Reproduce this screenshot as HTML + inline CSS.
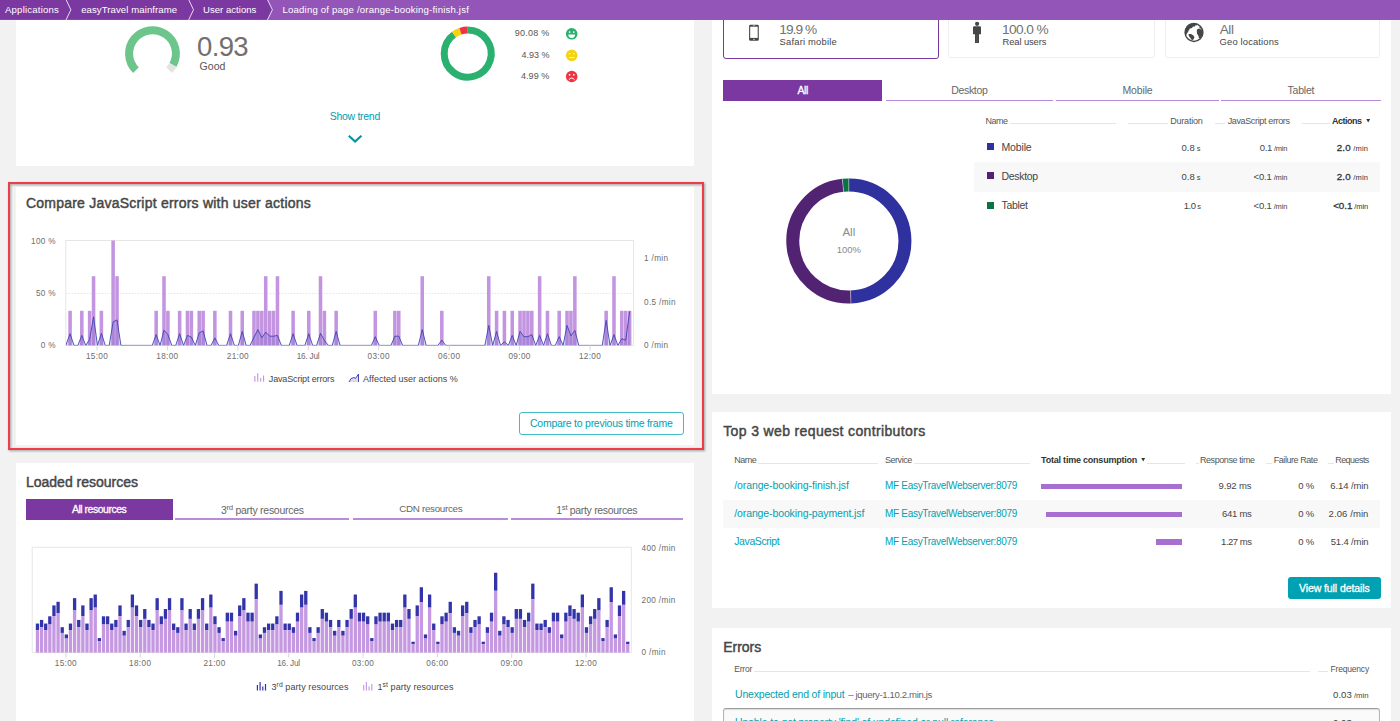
<!DOCTYPE html>
<html><head><meta charset="utf-8">
<style>
*{box-sizing:border-box;margin:0;padding:0}
html,body{width:1400px;height:721px;overflow:hidden;background:#f2f2f2;font-family:"Liberation Sans",sans-serif;color:#454646}
.abs{position:absolute}
.card{position:absolute;background:#fff}
#hdr{position:absolute;left:0;top:0;width:1400px;height:19.5px;background:#9355b7;z-index:10}
#hdr svg{position:absolute;left:0;top:0}
.t{position:absolute;white-space:nowrap}
.ax{font-family:"Liberation Sans",sans-serif;font-size:8.2px;fill:#6d6d6d;letter-spacing:0.35px}
.ul{position:absolute;height:1px;background:#e6e6e6}
</style></head><body>
<div id="hdr">
<svg width="1400" height="20" viewBox="0 0 1400 20">
<path d="M0,0 H267.4 L272.4,9.75 L267.4,19.5 H0 Z" fill="#7c38a1"/>
<path d="M66,-0.5 L70.9,9.75 L66,20" fill="none" stroke="#e9d9f3" stroke-width="1"/>
<path d="M188.6,-0.5 L193.5,9.75 L188.6,20" fill="none" stroke="#e9d9f3" stroke-width="1"/>
<path d="M267.4,-0.5 L272.4,9.75 L267.4,20" fill="none" stroke="#e9d9f3" stroke-width="1"/>
</svg>
<div class="t" style="letter-spacing:0.189px;top:3.00px;font-size:9.6px;line-height:13px;color:#fff;left:5px;"><span>Applications</span></div>
<div class="t" style="letter-spacing:0.073px;top:3.00px;font-size:9.6px;line-height:13px;color:#fff;left:81.2px;"><span>easyTravel mainframe</span></div>
<div class="t" style="letter-spacing:0.006px;top:3.00px;font-size:9.6px;line-height:13px;color:#fff;left:203px;"><span>User actions</span></div>
<div class="t" style="letter-spacing:0.186px;top:3.00px;font-size:9.6px;line-height:13px;color:#fff;left:282.5px;"><span>Loading of page /orange-booking-finish.jsf</span></div>
</div>
<div class="card" style="left:16px;top:20px;width:678px;height:145.7px"></div>
<svg class="abs" style="left:0;top:0" width="700" height="170" viewBox="0 0 700 170">
<path d="M135.95,70.15 A23.4,23.4 0 1 1 172.97,64.94" fill="none" stroke="#6cc58b" stroke-width="8"/>
<path d="M172.97,64.94 A23.4,23.4 0 0 1 169.05,70.15" fill="none" stroke="#e3e3e3" stroke-width="8"/>
<path d="M467.70,30.10 A23.5,23.5 0 1 1 453.99,34.52" fill="none" stroke="#2ab06f" stroke-width="7"/>
<path d="M453.99,34.52 A23.5,23.5 0 0 1 460.44,31.25" fill="none" stroke="#f5d30f" stroke-width="7"/>
<path d="M460.44,31.25 A23.5,23.5 0 0 1 467.70,30.10" fill="none" stroke="#ef3340" stroke-width="7"/>
<g transform="translate(0,0.8)"><circle cx="571.7" cy="33" r="5.8" fill="#2ab06f"/>
<circle cx="569.6" cy="31.3" r="0.9" fill="#fff"/><circle cx="573.8" cy="31.3" r="0.9" fill="#fff"/>
<path d="M568.3,33.8 H575.1 A3.4,3.4 0 0 1 568.3,33.8 Z" fill="#fff"/>
<circle cx="571.7" cy="54.5" r="5.8" fill="#f5d30f"/>
<circle cx="569.6" cy="53" r="0.8" fill="#fff" fill-opacity=".8"/><circle cx="573.8" cy="53" r="0.8" fill="#fff" fill-opacity=".8"/>
<rect x="569" y="56.3" width="5.4" height="1" fill="#fff" fill-opacity=".8"/>
<circle cx="571.7" cy="75.7" r="5.8" fill="#ef3340"/>
<circle cx="569.6" cy="74" r="0.9" fill="#fff"/><circle cx="573.8" cy="74" r="0.9" fill="#fff"/>
<path d="M568.8,79 Q571.7,75.5 574.6,79" fill="none" stroke="#fff" stroke-width="1"/>
</g>
<path d="M348.8,135.8 L355.1,141.6 L361.4,135.8" fill="none" stroke="#0097a7" stroke-width="2.2"/>
</svg>
<div class="t" style="letter-spacing:-0.633px;top:30.00px;font-size:27.5px;line-height:33px;color:#707070;left:197px;"><span>0.93</span></div>
<div class="t" style="letter-spacing:0.078px;top:59.00px;font-size:10.5px;line-height:14px;color:#555;left:199.5px;"><span>Good</span></div>
<div class="t" style="letter-spacing:0.238px;top:27.00px;font-size:9px;line-height:12px;color:#555;right:850.60px;"><span>90.08 %</span></div>
<div class="t" style="letter-spacing:-0.005px;top:49.00px;font-size:9px;line-height:12px;color:#555;right:850.60px;"><span>4.93 %</span></div>
<div class="t" style="letter-spacing:0.078px;top:70.00px;font-size:9px;line-height:12px;color:#555;right:850.60px;"><span>4.99 %</span></div>
<div class="t" style="letter-spacing:-0.283px;top:109.00px;font-size:10.5px;line-height:14px;color:#00a1b2;left:329.7px;"><span>Show trend</span></div>
<div class="abs" style="left:8px;top:182px;width:695.5px;height:268px;border:2px solid #ee3d48;filter:drop-shadow(1px 1.5px 1.2px rgba(0,0,0,.36))"></div>
<div class="card" style="left:16px;top:187px;width:678px;height:257.7px"></div>
<div class="t" style="letter-spacing:0.222px;top:194.00px;font-size:14px;line-height:18px;color:#454646;-webkit-text-stroke:0.45px #454646;left:26px;"><span>Compare JavaScript errors with user actions</span></div>
<svg class="abs" style="left:0;top:0" width="700" height="460" viewBox="0 0 700 460">
<rect x="65.8" y="240.5" width="567.7" height="104.89999999999998" fill="#fff" stroke="#e6e6e6" stroke-width="1"/>
<line x1="65.8" x2="633.5" y1="293.4" y2="293.4" stroke="#e4e4e4" stroke-width="1" stroke-dasharray="1.5,1.5"/>
<line x1="65.8" x2="633.5" y1="240.5" y2="240.5" stroke="#e6e6e6" stroke-width="1" stroke-dasharray="1.5,1.5"/>
<rect x="68.30" y="310.80" width="3.55" height="34.60" fill="#c395e1"/>
<rect x="80.04" y="310.80" width="3.55" height="34.60" fill="#c395e1"/>
<rect x="87.86" y="310.80" width="3.55" height="34.60" fill="#c395e1"/>
<rect x="91.78" y="276.20" width="3.55" height="69.20" fill="#c395e1"/>
<rect x="99.60" y="310.80" width="3.55" height="34.60" fill="#c395e1"/>
<rect x="111.34" y="240.50" width="3.55" height="104.90" fill="#c395e1"/>
<rect x="115.26" y="276.20" width="3.55" height="69.20" fill="#c395e1"/>
<rect x="154.39" y="310.80" width="3.55" height="34.60" fill="#c395e1"/>
<rect x="162.21" y="276.20" width="3.55" height="69.20" fill="#c395e1"/>
<rect x="166.12" y="310.80" width="3.55" height="34.60" fill="#c395e1"/>
<rect x="177.86" y="310.80" width="3.55" height="34.60" fill="#c395e1"/>
<rect x="185.69" y="310.80" width="3.55" height="34.60" fill="#c395e1"/>
<rect x="189.60" y="310.80" width="3.55" height="34.60" fill="#c395e1"/>
<rect x="197.43" y="310.80" width="3.55" height="34.60" fill="#c395e1"/>
<rect x="201.34" y="310.80" width="3.55" height="34.60" fill="#c395e1"/>
<rect x="213.08" y="310.80" width="3.55" height="34.60" fill="#c395e1"/>
<rect x="228.73" y="310.80" width="3.55" height="34.60" fill="#c395e1"/>
<rect x="240.47" y="310.80" width="3.55" height="34.60" fill="#c395e1"/>
<rect x="252.21" y="310.80" width="3.55" height="34.60" fill="#c395e1"/>
<rect x="256.12" y="310.80" width="3.55" height="34.60" fill="#c395e1"/>
<rect x="260.04" y="310.80" width="3.55" height="34.60" fill="#c395e1"/>
<rect x="263.95" y="276.20" width="3.55" height="69.20" fill="#c395e1"/>
<rect x="267.86" y="310.80" width="3.55" height="34.60" fill="#c395e1"/>
<rect x="271.78" y="310.80" width="3.55" height="34.60" fill="#c395e1"/>
<rect x="275.69" y="276.20" width="3.55" height="69.20" fill="#c395e1"/>
<rect x="291.34" y="310.80" width="3.55" height="34.60" fill="#c395e1"/>
<rect x="306.99" y="310.80" width="3.55" height="34.60" fill="#c395e1"/>
<rect x="318.73" y="276.20" width="3.55" height="69.20" fill="#c395e1"/>
<rect x="322.64" y="310.80" width="3.55" height="34.60" fill="#c395e1"/>
<rect x="334.38" y="310.80" width="3.55" height="34.60" fill="#c395e1"/>
<rect x="373.51" y="310.80" width="3.55" height="34.60" fill="#c395e1"/>
<rect x="393.08" y="310.80" width="3.55" height="34.60" fill="#c395e1"/>
<rect x="396.99" y="310.80" width="3.55" height="34.60" fill="#c395e1"/>
<rect x="420.47" y="276.20" width="3.55" height="69.20" fill="#c395e1"/>
<rect x="440.03" y="310.80" width="3.55" height="34.60" fill="#c395e1"/>
<rect x="486.99" y="276.20" width="3.55" height="69.20" fill="#c395e1"/>
<rect x="494.82" y="310.80" width="3.55" height="34.60" fill="#c395e1"/>
<rect x="502.64" y="310.80" width="3.55" height="34.60" fill="#c395e1"/>
<rect x="510.47" y="310.80" width="3.55" height="34.60" fill="#c395e1"/>
<rect x="518.29" y="310.80" width="3.55" height="34.60" fill="#c395e1"/>
<rect x="522.21" y="310.80" width="3.55" height="34.60" fill="#c395e1"/>
<rect x="526.12" y="310.80" width="3.55" height="34.60" fill="#c395e1"/>
<rect x="530.03" y="310.80" width="3.55" height="34.60" fill="#c395e1"/>
<rect x="537.86" y="276.20" width="3.55" height="69.20" fill="#c395e1"/>
<rect x="545.69" y="310.80" width="3.55" height="34.60" fill="#c395e1"/>
<rect x="557.42" y="310.80" width="3.55" height="34.60" fill="#c395e1"/>
<rect x="565.25" y="310.80" width="3.55" height="34.60" fill="#c395e1"/>
<rect x="569.16" y="310.80" width="3.55" height="34.60" fill="#c395e1"/>
<rect x="573.08" y="276.20" width="3.55" height="69.20" fill="#c395e1"/>
<rect x="604.38" y="310.80" width="3.55" height="34.60" fill="#c395e1"/>
<rect x="612.21" y="276.20" width="3.55" height="69.20" fill="#c395e1"/>
<rect x="620.03" y="310.80" width="3.55" height="34.60" fill="#c395e1"/>
<rect x="623.95" y="310.80" width="3.55" height="34.60" fill="#c395e1"/>
<rect x="627.86" y="310.80" width="3.55" height="34.60" fill="#c395e1"/>
<polygon points="65.80,345.4 65.8,345.4 70.08,333.70 73.99,345.40 77.90,345.40 81.81,335.40 85.73,345.40 89.64,339.40 93.55,316.80 97.47,345.40 101.38,333.40 105.29,345.40 109.20,345.40 113.12,321.80 117.03,319.90 120.94,345.40 124.86,345.40 128.77,345.40 132.68,345.40 136.60,345.40 140.51,345.40 144.42,345.40 148.33,345.40 152.25,345.40 156.16,334.60 160.07,345.40 163.99,330.10 167.90,334.60 171.81,345.40 175.73,345.40 179.64,333.70 183.55,345.40 187.47,335.40 191.38,337.10 195.29,345.40 199.20,332.90 203.12,330.90 207.03,345.40 210.94,345.40 214.86,337.90 218.77,345.40 222.68,345.40 226.59,345.40 230.51,333.70 234.42,345.40 238.33,345.40 242.25,331.40 246.16,345.40 250.07,345.40 253.99,337.10 257.90,329.60 261.81,337.90 265.72,332.10 269.64,336.20 273.55,336.20 277.46,335.40 281.38,345.40 285.29,345.40 289.20,345.40 293.12,333.70 297.03,345.40 300.94,345.40 304.86,345.40 308.77,333.70 312.68,345.40 316.59,345.40 320.51,333.40 324.42,340.40 328.33,345.40 332.25,345.40 336.16,331.40 340.07,345.40 343.98,345.40 347.90,345.40 351.81,345.40 355.72,345.40 359.64,345.40 363.55,345.40 367.46,345.40 371.38,345.40 375.29,336.70 379.20,345.40 383.11,345.40 387.03,345.40 390.94,345.40 394.85,336.20 398.77,336.20 402.68,345.40 406.59,345.40 410.51,345.40 414.42,345.40 418.33,345.40 422.24,329.60 426.16,345.40 430.07,345.40 433.98,345.40 437.90,345.40 441.81,340.10 445.72,345.40 449.64,345.40 453.55,345.40 457.46,345.40 461.37,345.40 465.29,345.40 469.20,345.40 473.11,345.40 477.03,345.40 480.94,345.40 484.85,345.40 488.77,325.40 492.68,345.40 496.59,331.40 500.50,345.40 504.42,341.70 508.33,345.40 512.24,335.40 516.16,345.40 520.07,331.40 523.98,336.70 527.90,336.70 531.81,334.60 535.72,345.40 539.63,335.40 543.55,345.40 547.46,333.70 551.37,345.40 555.29,345.40 559.20,336.60 563.11,345.40 567.03,325.40 570.94,335.90 574.85,330.40 578.76,345.40 582.68,345.40 586.59,345.40 590.50,345.40 594.42,345.40 598.33,345.40 602.24,345.40 606.16,320.40 610.07,345.40 613.98,334.60 617.89,345.40 621.81,338.70 625.72,340.10 629.63,311.40 629.63,345.4" fill="#4a3fb0" fill-opacity="0.18"/>
<clipPath id="cp1"><rect x="65.8" y="240.5" width="567.7" height="105.04999999999998"/></clipPath>
<polyline clip-path="url(#cp1)" points="65.8,345.4 70.08,333.70 73.99,345.40 77.90,345.40 81.81,335.40 85.73,345.40 89.64,339.40 93.55,316.80 97.47,345.40 101.38,333.40 105.29,345.40 109.20,345.40 113.12,321.80 117.03,319.90 120.94,345.40 124.86,345.40 128.77,345.40 132.68,345.40 136.60,345.40 140.51,345.40 144.42,345.40 148.33,345.40 152.25,345.40 156.16,334.60 160.07,345.40 163.99,330.10 167.90,334.60 171.81,345.40 175.73,345.40 179.64,333.70 183.55,345.40 187.47,335.40 191.38,337.10 195.29,345.40 199.20,332.90 203.12,330.90 207.03,345.40 210.94,345.40 214.86,337.90 218.77,345.40 222.68,345.40 226.59,345.40 230.51,333.70 234.42,345.40 238.33,345.40 242.25,331.40 246.16,345.40 250.07,345.40 253.99,337.10 257.90,329.60 261.81,337.90 265.72,332.10 269.64,336.20 273.55,336.20 277.46,335.40 281.38,345.40 285.29,345.40 289.20,345.40 293.12,333.70 297.03,345.40 300.94,345.40 304.86,345.40 308.77,333.70 312.68,345.40 316.59,345.40 320.51,333.40 324.42,340.40 328.33,345.40 332.25,345.40 336.16,331.40 340.07,345.40 343.98,345.40 347.90,345.40 351.81,345.40 355.72,345.40 359.64,345.40 363.55,345.40 367.46,345.40 371.38,345.40 375.29,336.70 379.20,345.40 383.11,345.40 387.03,345.40 390.94,345.40 394.85,336.20 398.77,336.20 402.68,345.40 406.59,345.40 410.51,345.40 414.42,345.40 418.33,345.40 422.24,329.60 426.16,345.40 430.07,345.40 433.98,345.40 437.90,345.40 441.81,340.10 445.72,345.40 449.64,345.40 453.55,345.40 457.46,345.40 461.37,345.40 465.29,345.40 469.20,345.40 473.11,345.40 477.03,345.40 480.94,345.40 484.85,345.40 488.77,325.40 492.68,345.40 496.59,331.40 500.50,345.40 504.42,341.70 508.33,345.40 512.24,335.40 516.16,345.40 520.07,331.40 523.98,336.70 527.90,336.70 531.81,334.60 535.72,345.40 539.63,335.40 543.55,345.40 547.46,333.70 551.37,345.40 555.29,345.40 559.20,336.60 563.11,345.40 567.03,325.40 570.94,335.90 574.85,330.40 578.76,345.40 582.68,345.40 586.59,345.40 590.50,345.40 594.42,345.40 598.33,345.40 602.24,345.40 606.16,320.40 610.07,345.40 613.98,334.60 617.89,345.40 621.81,338.70 625.72,340.10 629.63,311.40" fill="none" stroke="#3f43b5" stroke-width="0.9" stroke-linejoin="round"/>
<line x1="97" x2="97" y1="345.4" y2="350.4" stroke="#d8d8d8" stroke-width="1"/>
<text x="97" y="359.3" class="ax" text-anchor="middle">15:00</text>
<line x1="167.4" x2="167.4" y1="345.4" y2="350.4" stroke="#d8d8d8" stroke-width="1"/>
<text x="167.4" y="359.3" class="ax" text-anchor="middle">18:00</text>
<line x1="237.9" x2="237.9" y1="345.4" y2="350.4" stroke="#d8d8d8" stroke-width="1"/>
<text x="237.9" y="359.3" class="ax" text-anchor="middle">21:00</text>
<line x1="308.3" x2="308.3" y1="345.4" y2="350.4" stroke="#d8d8d8" stroke-width="1"/>
<text x="308.3" y="359.3" class="ax" text-anchor="middle" textLength="23.2" lengthAdjust="spacing">16. Jul</text>
<line x1="378.7" x2="378.7" y1="345.4" y2="350.4" stroke="#d8d8d8" stroke-width="1"/>
<text x="378.7" y="359.3" class="ax" text-anchor="middle">03:00</text>
<line x1="449.2" x2="449.2" y1="345.4" y2="350.4" stroke="#d8d8d8" stroke-width="1"/>
<text x="449.2" y="359.3" class="ax" text-anchor="middle">06:00</text>
<line x1="519.6" x2="519.6" y1="345.4" y2="350.4" stroke="#d8d8d8" stroke-width="1"/>
<text x="519.6" y="359.3" class="ax" text-anchor="middle">09:00</text>
<line x1="590" x2="590" y1="345.4" y2="350.4" stroke="#d8d8d8" stroke-width="1"/>
<text x="590" y="359.3" class="ax" text-anchor="middle">12:00</text>
<text x="56" y="243.5" class="ax" text-anchor="end">100 %</text>
<text x="56" y="296" class="ax" text-anchor="end">50 %</text>
<text x="56" y="348" class="ax" text-anchor="end">0 %</text>
<text x="644" y="260.5" class="ax">1 /min</text>
<text x="644" y="304.6" class="ax">0.5 /min</text>
<text x="644" y="347.8" class="ax">0 /min</text>
<g fill="#c395e1"><rect x="254.3" y="376" width="1.1" height="5.7"/><rect x="257.2" y="373.2" width="1.1" height="8.5"/><rect x="260.1" y="378" width="1.1" height="3.7"/><rect x="263" y="375.5" width="1.1" height="6.2"/></g>
<path d="M349,382 L351,378.5 L354,377.5 L355.5,378.5 L358.5,374 V382 Z" fill="#4a3fb0" fill-opacity=".2"/>
<path d="M349,382 L351,378.5 L354,377.5 L355.5,378.5 L358.5,374 V382" fill="none" stroke="#4a47b5" stroke-width="1"/>
</svg>
<div class="t" style="letter-spacing:-0.149px;top:373.00px;font-size:9px;line-height:12px;color:#454646;left:268.8px;"><span>JavaScript errors</span></div>
<div class="t" style="letter-spacing:0.009px;top:373.00px;font-size:9px;line-height:12px;color:#454646;left:363.1px;"><span>Affected user actions %</span></div>
<div class="abs" style="left:518.5px;top:412.2px;width:165px;height:22.6px;border:1px solid #45b9c6;border-radius:3px"></div>
<div class="t" style="letter-spacing:-0.249px;top:416.00px;font-size:10.5px;line-height:14px;color:#00a1b2;left:530px;"><span>Compare to previous time frame</span></div>
<div class="card" style="left:16px;top:463px;width:678px;height:270px"></div>
<div class="t" style="letter-spacing:-0.005px;top:473.00px;font-size:14px;line-height:18px;color:#454646;-webkit-text-stroke:0.45px #454646;left:26px;"><span>Loaded resources</span></div>
<div class="abs" style="left:26px;top:499.1px;width:147px;height:20.6px;background:#7c38a1"></div>
<div class="abs" style="left:175px;top:518.4px;width:174.4px;height:1.15px;background:#b98bdb"></div>
<div class="abs" style="left:352.8px;top:518.4px;width:155.2px;height:1.15px;background:#b98bdb"></div>
<div class="abs" style="left:511px;top:518.4px;width:172.0px;height:1.15px;background:#b98bdb"></div>
<div class="t" style="letter-spacing:-0.496px;top:502.00px;font-size:10.5px;line-height:14px;color:#fff;-webkit-text-stroke:0.3px #fff;left:72px;"><span>All resources</span></div>
<div class="t" style="letter-spacing:-0.277px;top:503.00px;font-size:10.5px;line-height:14px;color:#666;left:220.9px;"><span>3<sup style="font-size:7.8px;line-height:0;vertical-align:baseline;position:relative;top:-3.6px">rd</sup> party resources</span></div>
<div class="t" style="letter-spacing:-0.298px;top:502.00px;font-size:9.8px;line-height:13px;color:#666;left:399.2px;"><span>CDN resources</span></div>
<div class="t" style="letter-spacing:-0.326px;top:503.00px;font-size:10.5px;line-height:14px;color:#666;left:556.3px;"><span>1<sup style="font-size:7.8px;line-height:0;vertical-align:baseline;position:relative;top:-3.6px">st</sup> party resources</span></div>
<svg class="abs" style="left:0;top:0" width="700" height="721" viewBox="0 0 700 721">
<rect x="32.2" y="547.2" width="599.0999999999999" height="105.39999999999998" fill="#fff" stroke="#e6e6e6" stroke-width="1"/>
<rect x="35.80" y="623.56" width="3.3" height="6.56" fill="#3333aa"/>
<rect x="35.80" y="630.12" width="3.3" height="22.48" fill="#c598e2"/>
<rect x="39.93" y="619.93" width="3.3" height="7.38" fill="#3333aa"/>
<rect x="39.93" y="627.31" width="3.3" height="25.29" fill="#c598e2"/>
<rect x="44.06" y="623.56" width="3.3" height="6.56" fill="#3333aa"/>
<rect x="44.06" y="630.12" width="3.3" height="22.48" fill="#c598e2"/>
<rect x="48.18" y="616.30" width="3.3" height="8.20" fill="#3333aa"/>
<rect x="48.18" y="624.50" width="3.3" height="28.10" fill="#c598e2"/>
<rect x="52.31" y="605.41" width="3.3" height="10.66" fill="#3333aa"/>
<rect x="52.31" y="616.07" width="3.3" height="36.53" fill="#c598e2"/>
<rect x="56.44" y="601.78" width="3.3" height="11.48" fill="#3333aa"/>
<rect x="56.44" y="613.26" width="3.3" height="39.34" fill="#c598e2"/>
<rect x="60.57" y="627.19" width="3.3" height="5.74" fill="#3333aa"/>
<rect x="60.57" y="632.93" width="3.3" height="19.67" fill="#c598e2"/>
<rect x="64.70" y="634.45" width="3.3" height="4.10" fill="#3333aa"/>
<rect x="64.70" y="638.55" width="3.3" height="14.05" fill="#c598e2"/>
<rect x="68.82" y="623.56" width="3.3" height="6.56" fill="#3333aa"/>
<rect x="68.82" y="630.12" width="3.3" height="22.48" fill="#c598e2"/>
<rect x="72.95" y="598.15" width="3.3" height="12.30" fill="#3333aa"/>
<rect x="72.95" y="610.45" width="3.3" height="42.15" fill="#c598e2"/>
<rect x="77.08" y="619.93" width="3.3" height="7.38" fill="#3333aa"/>
<rect x="77.08" y="627.31" width="3.3" height="25.29" fill="#c598e2"/>
<rect x="81.21" y="605.41" width="3.3" height="10.66" fill="#3333aa"/>
<rect x="81.21" y="616.07" width="3.3" height="36.53" fill="#c598e2"/>
<rect x="85.34" y="623.56" width="3.3" height="6.56" fill="#3333aa"/>
<rect x="85.34" y="630.12" width="3.3" height="22.48" fill="#c598e2"/>
<rect x="89.46" y="598.15" width="3.3" height="12.30" fill="#3333aa"/>
<rect x="89.46" y="610.45" width="3.3" height="42.15" fill="#c598e2"/>
<rect x="93.59" y="594.52" width="3.3" height="13.12" fill="#3333aa"/>
<rect x="93.59" y="607.64" width="3.3" height="44.96" fill="#c598e2"/>
<rect x="97.72" y="638.08" width="3.3" height="3.28" fill="#3333aa"/>
<rect x="97.72" y="641.36" width="3.3" height="11.24" fill="#c598e2"/>
<rect x="101.85" y="616.30" width="3.3" height="8.20" fill="#3333aa"/>
<rect x="101.85" y="624.50" width="3.3" height="28.10" fill="#c598e2"/>
<rect x="105.98" y="616.30" width="3.3" height="8.20" fill="#3333aa"/>
<rect x="105.98" y="624.50" width="3.3" height="28.10" fill="#c598e2"/>
<rect x="110.10" y="623.56" width="3.3" height="6.56" fill="#3333aa"/>
<rect x="110.10" y="630.12" width="3.3" height="22.48" fill="#c598e2"/>
<rect x="114.23" y="619.93" width="3.3" height="7.38" fill="#3333aa"/>
<rect x="114.23" y="627.31" width="3.3" height="25.29" fill="#c598e2"/>
<rect x="118.36" y="605.41" width="3.3" height="10.66" fill="#3333aa"/>
<rect x="118.36" y="616.07" width="3.3" height="36.53" fill="#c598e2"/>
<rect x="122.49" y="630.82" width="3.3" height="4.92" fill="#3333aa"/>
<rect x="122.49" y="635.74" width="3.3" height="16.86" fill="#c598e2"/>
<rect x="126.62" y="619.93" width="3.3" height="7.38" fill="#3333aa"/>
<rect x="126.62" y="627.31" width="3.3" height="25.29" fill="#c598e2"/>
<rect x="130.74" y="594.52" width="3.3" height="13.12" fill="#3333aa"/>
<rect x="130.74" y="607.64" width="3.3" height="44.96" fill="#c598e2"/>
<rect x="134.87" y="605.41" width="3.3" height="10.66" fill="#3333aa"/>
<rect x="134.87" y="616.07" width="3.3" height="36.53" fill="#c598e2"/>
<rect x="139.00" y="619.93" width="3.3" height="7.38" fill="#3333aa"/>
<rect x="139.00" y="627.31" width="3.3" height="25.29" fill="#c598e2"/>
<rect x="143.13" y="609.04" width="3.3" height="9.84" fill="#3333aa"/>
<rect x="143.13" y="618.88" width="3.3" height="33.72" fill="#c598e2"/>
<rect x="147.26" y="619.93" width="3.3" height="7.38" fill="#3333aa"/>
<rect x="147.26" y="627.31" width="3.3" height="25.29" fill="#c598e2"/>
<rect x="151.38" y="623.56" width="3.3" height="6.56" fill="#3333aa"/>
<rect x="151.38" y="630.12" width="3.3" height="22.48" fill="#c598e2"/>
<rect x="155.51" y="598.15" width="3.3" height="12.30" fill="#3333aa"/>
<rect x="155.51" y="610.45" width="3.3" height="42.15" fill="#c598e2"/>
<rect x="159.64" y="616.30" width="3.3" height="8.20" fill="#3333aa"/>
<rect x="159.64" y="624.50" width="3.3" height="28.10" fill="#c598e2"/>
<rect x="163.77" y="609.04" width="3.3" height="9.84" fill="#3333aa"/>
<rect x="163.77" y="618.88" width="3.3" height="33.72" fill="#c598e2"/>
<rect x="167.90" y="598.15" width="3.3" height="12.30" fill="#3333aa"/>
<rect x="167.90" y="610.45" width="3.3" height="42.15" fill="#c598e2"/>
<rect x="172.02" y="623.56" width="3.3" height="6.56" fill="#3333aa"/>
<rect x="172.02" y="630.12" width="3.3" height="22.48" fill="#c598e2"/>
<rect x="176.15" y="627.19" width="3.3" height="5.74" fill="#3333aa"/>
<rect x="176.15" y="632.93" width="3.3" height="19.67" fill="#c598e2"/>
<rect x="180.28" y="598.15" width="3.3" height="12.30" fill="#3333aa"/>
<rect x="180.28" y="610.45" width="3.3" height="42.15" fill="#c598e2"/>
<rect x="184.41" y="623.56" width="3.3" height="6.56" fill="#3333aa"/>
<rect x="184.41" y="630.12" width="3.3" height="22.48" fill="#c598e2"/>
<rect x="188.54" y="609.04" width="3.3" height="9.84" fill="#3333aa"/>
<rect x="188.54" y="618.88" width="3.3" height="33.72" fill="#c598e2"/>
<rect x="192.66" y="623.56" width="3.3" height="6.56" fill="#3333aa"/>
<rect x="192.66" y="630.12" width="3.3" height="22.48" fill="#c598e2"/>
<rect x="196.79" y="609.04" width="3.3" height="9.84" fill="#3333aa"/>
<rect x="196.79" y="618.88" width="3.3" height="33.72" fill="#c598e2"/>
<rect x="200.92" y="598.15" width="3.3" height="12.30" fill="#3333aa"/>
<rect x="200.92" y="610.45" width="3.3" height="42.15" fill="#c598e2"/>
<rect x="205.05" y="623.56" width="3.3" height="6.56" fill="#3333aa"/>
<rect x="205.05" y="630.12" width="3.3" height="22.48" fill="#c598e2"/>
<rect x="209.18" y="594.52" width="3.3" height="13.12" fill="#3333aa"/>
<rect x="209.18" y="607.64" width="3.3" height="44.96" fill="#c598e2"/>
<rect x="213.30" y="616.30" width="3.3" height="8.20" fill="#3333aa"/>
<rect x="213.30" y="624.50" width="3.3" height="28.10" fill="#c598e2"/>
<rect x="217.43" y="627.19" width="3.3" height="5.74" fill="#3333aa"/>
<rect x="217.43" y="632.93" width="3.3" height="19.67" fill="#c598e2"/>
<rect x="221.56" y="638.08" width="3.3" height="3.28" fill="#3333aa"/>
<rect x="221.56" y="641.36" width="3.3" height="11.24" fill="#c598e2"/>
<rect x="225.69" y="612.67" width="3.3" height="9.02" fill="#3333aa"/>
<rect x="225.69" y="621.69" width="3.3" height="30.91" fill="#c598e2"/>
<rect x="229.82" y="612.67" width="3.3" height="9.02" fill="#3333aa"/>
<rect x="229.82" y="621.69" width="3.3" height="30.91" fill="#c598e2"/>
<rect x="233.94" y="630.82" width="3.3" height="4.92" fill="#3333aa"/>
<rect x="233.94" y="635.74" width="3.3" height="16.86" fill="#c598e2"/>
<rect x="238.07" y="605.41" width="3.3" height="10.66" fill="#3333aa"/>
<rect x="238.07" y="616.07" width="3.3" height="36.53" fill="#c598e2"/>
<rect x="242.20" y="598.15" width="3.3" height="12.30" fill="#3333aa"/>
<rect x="242.20" y="610.45" width="3.3" height="42.15" fill="#c598e2"/>
<rect x="246.33" y="612.67" width="3.3" height="9.02" fill="#3333aa"/>
<rect x="246.33" y="621.69" width="3.3" height="30.91" fill="#c598e2"/>
<rect x="250.46" y="612.67" width="3.3" height="9.02" fill="#3333aa"/>
<rect x="250.46" y="621.69" width="3.3" height="30.91" fill="#c598e2"/>
<rect x="254.58" y="583.63" width="3.3" height="15.58" fill="#3333aa"/>
<rect x="254.58" y="599.21" width="3.3" height="53.39" fill="#c598e2"/>
<rect x="258.71" y="634.45" width="3.3" height="4.10" fill="#3333aa"/>
<rect x="258.71" y="638.55" width="3.3" height="14.05" fill="#c598e2"/>
<rect x="262.84" y="627.19" width="3.3" height="5.74" fill="#3333aa"/>
<rect x="262.84" y="632.93" width="3.3" height="19.67" fill="#c598e2"/>
<rect x="266.97" y="623.56" width="3.3" height="6.56" fill="#3333aa"/>
<rect x="266.97" y="630.12" width="3.3" height="22.48" fill="#c598e2"/>
<rect x="271.10" y="623.56" width="3.3" height="6.56" fill="#3333aa"/>
<rect x="271.10" y="630.12" width="3.3" height="22.48" fill="#c598e2"/>
<rect x="275.22" y="616.30" width="3.3" height="8.20" fill="#3333aa"/>
<rect x="275.22" y="624.50" width="3.3" height="28.10" fill="#c598e2"/>
<rect x="279.35" y="590.89" width="3.3" height="13.94" fill="#3333aa"/>
<rect x="279.35" y="604.83" width="3.3" height="47.77" fill="#c598e2"/>
<rect x="283.48" y="623.56" width="3.3" height="6.56" fill="#3333aa"/>
<rect x="283.48" y="630.12" width="3.3" height="22.48" fill="#c598e2"/>
<rect x="287.61" y="623.56" width="3.3" height="6.56" fill="#3333aa"/>
<rect x="287.61" y="630.12" width="3.3" height="22.48" fill="#c598e2"/>
<rect x="291.74" y="627.19" width="3.3" height="5.74" fill="#3333aa"/>
<rect x="291.74" y="632.93" width="3.3" height="19.67" fill="#c598e2"/>
<rect x="295.86" y="612.67" width="3.3" height="9.02" fill="#3333aa"/>
<rect x="295.86" y="621.69" width="3.3" height="30.91" fill="#c598e2"/>
<rect x="299.99" y="594.52" width="3.3" height="13.12" fill="#3333aa"/>
<rect x="299.99" y="607.64" width="3.3" height="44.96" fill="#c598e2"/>
<rect x="304.12" y="590.89" width="3.3" height="13.94" fill="#3333aa"/>
<rect x="304.12" y="604.83" width="3.3" height="47.77" fill="#c598e2"/>
<rect x="308.25" y="627.19" width="3.3" height="5.74" fill="#3333aa"/>
<rect x="308.25" y="632.93" width="3.3" height="19.67" fill="#c598e2"/>
<rect x="312.38" y="638.08" width="3.3" height="3.28" fill="#3333aa"/>
<rect x="312.38" y="641.36" width="3.3" height="11.24" fill="#c598e2"/>
<rect x="316.50" y="627.19" width="3.3" height="5.74" fill="#3333aa"/>
<rect x="316.50" y="632.93" width="3.3" height="19.67" fill="#c598e2"/>
<rect x="320.63" y="609.04" width="3.3" height="9.84" fill="#3333aa"/>
<rect x="320.63" y="618.88" width="3.3" height="33.72" fill="#c598e2"/>
<rect x="324.76" y="612.67" width="3.3" height="9.02" fill="#3333aa"/>
<rect x="324.76" y="621.69" width="3.3" height="30.91" fill="#c598e2"/>
<rect x="328.89" y="619.93" width="3.3" height="7.38" fill="#3333aa"/>
<rect x="328.89" y="627.31" width="3.3" height="25.29" fill="#c598e2"/>
<rect x="333.02" y="630.82" width="3.3" height="4.92" fill="#3333aa"/>
<rect x="333.02" y="635.74" width="3.3" height="16.86" fill="#c598e2"/>
<rect x="337.14" y="619.93" width="3.3" height="7.38" fill="#3333aa"/>
<rect x="337.14" y="627.31" width="3.3" height="25.29" fill="#c598e2"/>
<rect x="341.27" y="630.82" width="3.3" height="4.92" fill="#3333aa"/>
<rect x="341.27" y="635.74" width="3.3" height="16.86" fill="#c598e2"/>
<rect x="345.40" y="619.93" width="3.3" height="7.38" fill="#3333aa"/>
<rect x="345.40" y="627.31" width="3.3" height="25.29" fill="#c598e2"/>
<rect x="349.53" y="609.04" width="3.3" height="9.84" fill="#3333aa"/>
<rect x="349.53" y="618.88" width="3.3" height="33.72" fill="#c598e2"/>
<rect x="353.66" y="594.52" width="3.3" height="13.12" fill="#3333aa"/>
<rect x="353.66" y="607.64" width="3.3" height="44.96" fill="#c598e2"/>
<rect x="357.78" y="612.67" width="3.3" height="9.02" fill="#3333aa"/>
<rect x="357.78" y="621.69" width="3.3" height="30.91" fill="#c598e2"/>
<rect x="361.91" y="612.67" width="3.3" height="9.02" fill="#3333aa"/>
<rect x="361.91" y="621.69" width="3.3" height="30.91" fill="#c598e2"/>
<rect x="366.04" y="616.30" width="3.3" height="8.20" fill="#3333aa"/>
<rect x="366.04" y="624.50" width="3.3" height="28.10" fill="#c598e2"/>
<rect x="370.17" y="638.08" width="3.3" height="3.28" fill="#3333aa"/>
<rect x="370.17" y="641.36" width="3.3" height="11.24" fill="#c598e2"/>
<rect x="374.30" y="616.30" width="3.3" height="8.20" fill="#3333aa"/>
<rect x="374.30" y="624.50" width="3.3" height="28.10" fill="#c598e2"/>
<rect x="378.42" y="612.67" width="3.3" height="9.02" fill="#3333aa"/>
<rect x="378.42" y="621.69" width="3.3" height="30.91" fill="#c598e2"/>
<rect x="382.55" y="612.67" width="3.3" height="9.02" fill="#3333aa"/>
<rect x="382.55" y="621.69" width="3.3" height="30.91" fill="#c598e2"/>
<rect x="386.68" y="612.67" width="3.3" height="9.02" fill="#3333aa"/>
<rect x="386.68" y="621.69" width="3.3" height="30.91" fill="#c598e2"/>
<rect x="390.81" y="623.56" width="3.3" height="6.56" fill="#3333aa"/>
<rect x="390.81" y="630.12" width="3.3" height="22.48" fill="#c598e2"/>
<rect x="394.94" y="619.93" width="3.3" height="7.38" fill="#3333aa"/>
<rect x="394.94" y="627.31" width="3.3" height="25.29" fill="#c598e2"/>
<rect x="399.06" y="619.93" width="3.3" height="7.38" fill="#3333aa"/>
<rect x="399.06" y="627.31" width="3.3" height="25.29" fill="#c598e2"/>
<rect x="403.19" y="594.52" width="3.3" height="13.12" fill="#3333aa"/>
<rect x="403.19" y="607.64" width="3.3" height="44.96" fill="#c598e2"/>
<rect x="407.32" y="609.04" width="3.3" height="9.84" fill="#3333aa"/>
<rect x="407.32" y="618.88" width="3.3" height="33.72" fill="#c598e2"/>
<rect x="411.45" y="641.71" width="3.3" height="2.46" fill="#3333aa"/>
<rect x="411.45" y="644.17" width="3.3" height="8.43" fill="#c598e2"/>
<rect x="415.58" y="605.41" width="3.3" height="10.66" fill="#3333aa"/>
<rect x="415.58" y="616.07" width="3.3" height="36.53" fill="#c598e2"/>
<rect x="419.70" y="587.26" width="3.3" height="14.76" fill="#3333aa"/>
<rect x="419.70" y="602.02" width="3.3" height="50.58" fill="#c598e2"/>
<rect x="423.83" y="634.45" width="3.3" height="4.10" fill="#3333aa"/>
<rect x="423.83" y="638.55" width="3.3" height="14.05" fill="#c598e2"/>
<rect x="427.96" y="594.52" width="3.3" height="13.12" fill="#3333aa"/>
<rect x="427.96" y="607.64" width="3.3" height="44.96" fill="#c598e2"/>
<rect x="432.09" y="623.56" width="3.3" height="6.56" fill="#3333aa"/>
<rect x="432.09" y="630.12" width="3.3" height="22.48" fill="#c598e2"/>
<rect x="436.22" y="641.71" width="3.3" height="2.46" fill="#3333aa"/>
<rect x="436.22" y="644.17" width="3.3" height="8.43" fill="#c598e2"/>
<rect x="440.34" y="616.30" width="3.3" height="8.20" fill="#3333aa"/>
<rect x="440.34" y="624.50" width="3.3" height="28.10" fill="#c598e2"/>
<rect x="444.47" y="612.67" width="3.3" height="9.02" fill="#3333aa"/>
<rect x="444.47" y="621.69" width="3.3" height="30.91" fill="#c598e2"/>
<rect x="448.60" y="601.78" width="3.3" height="11.48" fill="#3333aa"/>
<rect x="448.60" y="613.26" width="3.3" height="39.34" fill="#c598e2"/>
<rect x="452.73" y="627.19" width="3.3" height="5.74" fill="#3333aa"/>
<rect x="452.73" y="632.93" width="3.3" height="19.67" fill="#c598e2"/>
<rect x="456.86" y="630.82" width="3.3" height="4.92" fill="#3333aa"/>
<rect x="456.86" y="635.74" width="3.3" height="16.86" fill="#c598e2"/>
<rect x="460.98" y="605.41" width="3.3" height="10.66" fill="#3333aa"/>
<rect x="460.98" y="616.07" width="3.3" height="36.53" fill="#c598e2"/>
<rect x="465.11" y="601.78" width="3.3" height="11.48" fill="#3333aa"/>
<rect x="465.11" y="613.26" width="3.3" height="39.34" fill="#c598e2"/>
<rect x="469.24" y="627.19" width="3.3" height="5.74" fill="#3333aa"/>
<rect x="469.24" y="632.93" width="3.3" height="19.67" fill="#c598e2"/>
<rect x="473.37" y="619.93" width="3.3" height="7.38" fill="#3333aa"/>
<rect x="473.37" y="627.31" width="3.3" height="25.29" fill="#c598e2"/>
<rect x="477.50" y="616.30" width="3.3" height="8.20" fill="#3333aa"/>
<rect x="477.50" y="624.50" width="3.3" height="28.10" fill="#c598e2"/>
<rect x="481.62" y="641.71" width="3.3" height="2.46" fill="#3333aa"/>
<rect x="481.62" y="644.17" width="3.3" height="8.43" fill="#c598e2"/>
<rect x="485.75" y="627.19" width="3.3" height="5.74" fill="#3333aa"/>
<rect x="485.75" y="632.93" width="3.3" height="19.67" fill="#c598e2"/>
<rect x="489.88" y="612.67" width="3.3" height="9.02" fill="#3333aa"/>
<rect x="489.88" y="621.69" width="3.3" height="30.91" fill="#c598e2"/>
<rect x="494.01" y="572.74" width="3.3" height="18.04" fill="#3333aa"/>
<rect x="494.01" y="590.78" width="3.3" height="61.82" fill="#c598e2"/>
<rect x="498.14" y="630.82" width="3.3" height="4.92" fill="#3333aa"/>
<rect x="498.14" y="635.74" width="3.3" height="16.86" fill="#c598e2"/>
<rect x="502.26" y="616.30" width="3.3" height="8.20" fill="#3333aa"/>
<rect x="502.26" y="624.50" width="3.3" height="28.10" fill="#c598e2"/>
<rect x="506.39" y="619.93" width="3.3" height="7.38" fill="#3333aa"/>
<rect x="506.39" y="627.31" width="3.3" height="25.29" fill="#c598e2"/>
<rect x="510.52" y="627.19" width="3.3" height="5.74" fill="#3333aa"/>
<rect x="510.52" y="632.93" width="3.3" height="19.67" fill="#c598e2"/>
<rect x="514.65" y="609.04" width="3.3" height="9.84" fill="#3333aa"/>
<rect x="514.65" y="618.88" width="3.3" height="33.72" fill="#c598e2"/>
<rect x="518.78" y="609.04" width="3.3" height="9.84" fill="#3333aa"/>
<rect x="518.78" y="618.88" width="3.3" height="33.72" fill="#c598e2"/>
<rect x="522.90" y="619.93" width="3.3" height="7.38" fill="#3333aa"/>
<rect x="522.90" y="627.31" width="3.3" height="25.29" fill="#c598e2"/>
<rect x="527.03" y="612.67" width="3.3" height="9.02" fill="#3333aa"/>
<rect x="527.03" y="621.69" width="3.3" height="30.91" fill="#c598e2"/>
<rect x="531.16" y="583.63" width="3.3" height="15.58" fill="#3333aa"/>
<rect x="531.16" y="599.21" width="3.3" height="53.39" fill="#c598e2"/>
<rect x="535.29" y="623.56" width="3.3" height="6.56" fill="#3333aa"/>
<rect x="535.29" y="630.12" width="3.3" height="22.48" fill="#c598e2"/>
<rect x="539.42" y="623.56" width="3.3" height="6.56" fill="#3333aa"/>
<rect x="539.42" y="630.12" width="3.3" height="22.48" fill="#c598e2"/>
<rect x="543.54" y="619.93" width="3.3" height="7.38" fill="#3333aa"/>
<rect x="543.54" y="627.31" width="3.3" height="25.29" fill="#c598e2"/>
<rect x="547.67" y="627.19" width="3.3" height="5.74" fill="#3333aa"/>
<rect x="547.67" y="632.93" width="3.3" height="19.67" fill="#c598e2"/>
<rect x="551.80" y="612.67" width="3.3" height="9.02" fill="#3333aa"/>
<rect x="551.80" y="621.69" width="3.3" height="30.91" fill="#c598e2"/>
<rect x="555.93" y="612.67" width="3.3" height="9.02" fill="#3333aa"/>
<rect x="555.93" y="621.69" width="3.3" height="30.91" fill="#c598e2"/>
<rect x="560.06" y="634.45" width="3.3" height="4.10" fill="#3333aa"/>
<rect x="560.06" y="638.55" width="3.3" height="14.05" fill="#c598e2"/>
<rect x="564.18" y="612.67" width="3.3" height="9.02" fill="#3333aa"/>
<rect x="564.18" y="621.69" width="3.3" height="30.91" fill="#c598e2"/>
<rect x="568.31" y="605.41" width="3.3" height="10.66" fill="#3333aa"/>
<rect x="568.31" y="616.07" width="3.3" height="36.53" fill="#c598e2"/>
<rect x="572.44" y="609.04" width="3.3" height="9.84" fill="#3333aa"/>
<rect x="572.44" y="618.88" width="3.3" height="33.72" fill="#c598e2"/>
<rect x="576.57" y="612.67" width="3.3" height="9.02" fill="#3333aa"/>
<rect x="576.57" y="621.69" width="3.3" height="30.91" fill="#c598e2"/>
<rect x="580.70" y="594.52" width="3.3" height="13.12" fill="#3333aa"/>
<rect x="580.70" y="607.64" width="3.3" height="44.96" fill="#c598e2"/>
<rect x="584.82" y="627.19" width="3.3" height="5.74" fill="#3333aa"/>
<rect x="584.82" y="632.93" width="3.3" height="19.67" fill="#c598e2"/>
<rect x="588.95" y="616.30" width="3.3" height="8.20" fill="#3333aa"/>
<rect x="588.95" y="624.50" width="3.3" height="28.10" fill="#c598e2"/>
<rect x="593.08" y="609.04" width="3.3" height="9.84" fill="#3333aa"/>
<rect x="593.08" y="618.88" width="3.3" height="33.72" fill="#c598e2"/>
<rect x="597.21" y="598.15" width="3.3" height="12.30" fill="#3333aa"/>
<rect x="597.21" y="610.45" width="3.3" height="42.15" fill="#c598e2"/>
<rect x="601.34" y="638.08" width="3.3" height="3.28" fill="#3333aa"/>
<rect x="601.34" y="641.36" width="3.3" height="11.24" fill="#c598e2"/>
<rect x="605.46" y="619.93" width="3.3" height="7.38" fill="#3333aa"/>
<rect x="605.46" y="627.31" width="3.3" height="25.29" fill="#c598e2"/>
<rect x="609.59" y="587.26" width="3.3" height="14.76" fill="#3333aa"/>
<rect x="609.59" y="602.02" width="3.3" height="50.58" fill="#c598e2"/>
<rect x="613.72" y="634.45" width="3.3" height="4.10" fill="#3333aa"/>
<rect x="613.72" y="638.55" width="3.3" height="14.05" fill="#c598e2"/>
<rect x="617.85" y="605.41" width="3.3" height="10.66" fill="#3333aa"/>
<rect x="617.85" y="616.07" width="3.3" height="36.53" fill="#c598e2"/>
<rect x="621.98" y="590.89" width="3.3" height="13.94" fill="#3333aa"/>
<rect x="621.98" y="604.83" width="3.3" height="47.77" fill="#c598e2"/>
<rect x="626.10" y="641.71" width="3.3" height="2.46" fill="#3333aa"/>
<rect x="626.10" y="644.17" width="3.3" height="8.43" fill="#c598e2"/>
<line x1="65.9" x2="65.9" y1="652.6" y2="657.6" stroke="#d8d8d8" stroke-width="1"/>
<text x="65.9" y="666.3" class="ax" text-anchor="middle">15:00</text>
<line x1="140.2" x2="140.2" y1="652.6" y2="657.6" stroke="#d8d8d8" stroke-width="1"/>
<text x="140.2" y="666.3" class="ax" text-anchor="middle">18:00</text>
<line x1="214.5" x2="214.5" y1="652.6" y2="657.6" stroke="#d8d8d8" stroke-width="1"/>
<text x="214.5" y="666.3" class="ax" text-anchor="middle">21:00</text>
<line x1="288.8" x2="288.8" y1="652.6" y2="657.6" stroke="#d8d8d8" stroke-width="1"/>
<text x="288.8" y="666.3" class="ax" text-anchor="middle" textLength="23.2" lengthAdjust="spacing">16. Jul</text>
<line x1="363.1" x2="363.1" y1="652.6" y2="657.6" stroke="#d8d8d8" stroke-width="1"/>
<text x="363.1" y="666.3" class="ax" text-anchor="middle">03:00</text>
<line x1="437.4" x2="437.4" y1="652.6" y2="657.6" stroke="#d8d8d8" stroke-width="1"/>
<text x="437.4" y="666.3" class="ax" text-anchor="middle">06:00</text>
<line x1="511.7" x2="511.7" y1="652.6" y2="657.6" stroke="#d8d8d8" stroke-width="1"/>
<text x="511.7" y="666.3" class="ax" text-anchor="middle">09:00</text>
<line x1="586" x2="586" y1="652.6" y2="657.6" stroke="#d8d8d8" stroke-width="1"/>
<text x="586" y="666.3" class="ax" text-anchor="middle">12:00</text>
<text x="641.5" y="550.5" class="ax">400 /min</text>
<text x="641.5" y="602.5" class="ax">200 /min</text>
<text x="641.5" y="655" class="ax">0 /min</text>
<g fill="#3333aa" transform="translate(-1.5,0)"><rect x="258.3" y="685" width="1.2" height="5.5"/><rect x="261" y="682" width="1.2" height="8.5"/><rect x="263.7" y="686.5" width="1.2" height="4"/><rect x="266.4" y="684" width="1.2" height="6.5"/></g>
<g fill="#c79ee3" transform="translate(-1.2,0)"><rect x="364.3" y="685" width="1.2" height="5.5"/><rect x="367" y="682" width="1.2" height="8.5"/><rect x="369.7" y="686.5" width="1.2" height="4"/><rect x="372.4" y="684" width="1.2" height="6.5"/></g>
</svg>
<div class="t" style="letter-spacing:0.074px;top:681.00px;font-size:9px;line-height:12px;color:#454646;left:271.5px;"><span>3<sup style="font-size:6.8px;line-height:0;vertical-align:baseline;position:relative;top:-3.2px">rd</sup> party resources</span></div>
<div class="t" style="letter-spacing:0.061px;top:681.00px;font-size:9px;line-height:12px;color:#454646;left:377.5px;"><span>1<sup style="font-size:6.8px;line-height:0;vertical-align:baseline;position:relative;top:-3.2px">st</sup> party resources</span></div>
<div class="card" style="left:712px;top:20px;width:679px;height:373.6px"></div>
<div class="abs" style="left:723px;top:5px;width:216px;height:53.8px;border:1.3px solid #7c38a1;border-radius:3px"></div>
<div class="abs" style="left:947.5px;top:5px;width:207px;height:52.5px;border:1px solid #eeeeee;border-radius:3px"></div>
<div class="abs" style="left:1164.5px;top:5px;width:215px;height:52.5px;border:1px solid #eeeeee;border-radius:3px"></div>
<svg class="abs" style="left:700px;top:0" width="700" height="400" viewBox="700 0 700 400">
<rect x="749.1" y="24.7" width="9.7" height="16" rx="1.3" fill="#454646"/>
<rect x="750.2" y="26.7" width="7.5" height="11.2" fill="#fff"/>
<rect x="752.9" y="25.4" width="2.2" height="0.6" fill="#fff" fill-opacity=".75"/>
<rect x="753.1" y="38.9" width="1.8" height="0.8" fill="#fff" fill-opacity=".85"/>
<circle cx="977.1" cy="23.8" r="2.1" fill="#454646"/>
<path d="M973,27.4 Q973,26.2 974.2,26.2 H979.8 Q981,26.2 981,27.4 V34.3 H979 V42.9 H975 V34.3 H973 Z" fill="#454646"/>
<rect x="976.85" y="35" width="0.3" height="7.9" fill="#fff" fill-opacity=".35"/>
<circle cx="1194" cy="32.5" r="8.9" fill="#fff" stroke="#454646" stroke-width="1.5"/>
<path d="M1186.5,26.5 L1188.5,24.5 1191.5,23.6 1196,23.6 1197.5,24.5 1196.5,25.5 1195.5,25.2 1194.5,26.8 1193,26.5 1192,28 1190,28.5 1189,30 1188,32 1187,33.5 1185.8,35.5 1185.2,32.5 1185.5,29 Z" fill="#454646"/>
<path d="M1188.5,34 L1191,34 1193.5,35.5 1194.5,37.5 1193,40 1191.5,39.8 1190,37.5 1188.8,36 Z" fill="#454646"/>
<path d="M1197,29.5 L1199,28.5 1201.5,29.5 1202.8,31 1202.8,35 1201,37.5 1199,38.5 1198.5,36 1197,33.5 1196.8,31 Z" fill="#454646"/>
<path d="M1199.5,26.5 L1201.5,27.5 1201,28.5 1199.5,28 Z" fill="#454646"/>
<path d="M848.80,185.00 A56,56 0 0 1 850.75,296.97" fill="none" stroke="#2e319e" stroke-width="13"/>
<path d="M850.75,296.97 A56,56 0 0 1 842.95,185.31" fill="none" stroke="#522273" stroke-width="13"/>
<path d="M842.95,185.31 A56,56 0 0 1 848.80,185.00" fill="none" stroke="#0b7245" stroke-width="13"/>
<g stroke="#fff" stroke-width="0.5" stroke-opacity=".8"><line x1="848.8" y1="178.5" x2="848.8" y2="191.5"/><line x1="850.53" y1="290.47" x2="850.98" y2="303.46"/><line x1="843.63" y1="191.77" x2="842.27" y2="178.84"/></g>
</svg>
<div class="t" style="letter-spacing:-0.971px;top:21.00px;font-size:13.7px;line-height:17px;color:#727272;left:779.3px;"><span>19.9 %</span></div>
<div class="t" style="letter-spacing:0.214px;top:35.00px;font-size:9.4px;line-height:13px;color:#454646;left:779.5px;"><span>Safari mobile</span></div>
<div class="t" style="letter-spacing:-0.605px;top:21.00px;font-size:13.7px;line-height:17px;color:#727272;left:1002px;"><span>100.0 %</span></div>
<div class="t" style="letter-spacing:-0.101px;top:35.00px;font-size:9.4px;line-height:13px;color:#454646;left:1002.5px;"><span>Real users</span></div>
<div class="t" style="letter-spacing:-0.403px;top:21.00px;font-size:13.6px;line-height:17px;color:#727272;left:1219.7px;"><span>All</span></div>
<div class="t" style="letter-spacing:0.152px;top:35.00px;font-size:9.4px;line-height:13px;color:#454646;left:1219.6px;"><span>Geo locations</span></div>
<div class="abs" style="left:723px;top:80.1px;width:159.2px;height:21.1px;background:#7c38a1"></div>
<div class="abs" style="left:885.5px;top:100px;width:167.5px;height:1.3px;background:#b98bdb"></div>
<div class="abs" style="left:1056px;top:100px;width:162.7px;height:1.3px;background:#b98bdb"></div>
<div class="abs" style="left:1221px;top:100px;width:159.7px;height:1.3px;background:#b98bdb"></div>
<div class="t" style="letter-spacing:-0.391px;top:83.00px;font-size:10.5px;line-height:14px;color:#fff;-webkit-text-stroke:0.3px #fff;left:797.5px;"><span>All</span></div>
<div class="t" style="letter-spacing:-0.326px;top:83.00px;font-size:10.5px;line-height:14px;color:#666;left:951.25px;"><span>Desktop</span></div>
<div class="t" style="letter-spacing:-0.156px;top:83.00px;font-size:10.5px;line-height:14px;color:#666;left:1122.5px;"><span>Mobile</span></div>
<div class="t" style="letter-spacing:-0.214px;top:83.00px;font-size:10.5px;line-height:14px;color:#666;left:1287.5px;"><span>Tablet</span></div>
<div class="t" style="top:225.00px;font-size:11.5px;line-height:14px;color:#8a8a8a;left:648.8px;width:400px;text-align:center;"><span>All</span></div>
<div class="t" style="top:243.00px;font-size:9.5px;line-height:13px;color:#8a8a8a;left:648.8px;width:400px;text-align:center;"><span>100%</span></div>
<div class="ul" style="left:1010px;top:123.3px;width:106.0px"></div>
<div class="ul" style="left:1128px;top:123.3px;width:40.0px"></div>
<div class="ul" style="left:1215px;top:123.3px;width:10.0px"></div>
<div class="ul" style="left:1302px;top:123.3px;width:28.0px"></div>
<div class="t" style="letter-spacing:-0.504px;top:115.00px;font-size:9px;line-height:12px;color:#555;left:985.6px;"><span>Name</span></div>
<div class="t" style="letter-spacing:-0.204px;top:115.00px;font-size:9px;line-height:12px;color:#555;right:197.40px;"><span>Duration</span></div>
<div class="t" style="letter-spacing:-0.355px;top:115.00px;font-size:9px;line-height:12px;color:#555;right:110.40px;"><span>JavaScript errors</span></div>
<div class="t" style="letter-spacing:-0.517px;top:115.00px;font-size:9px;line-height:12px;color:#333;font-weight:bold;left:1332.1px;"><span>Actions</span></div>
<svg class="abs" style="left:1365.6px;top:118.8px" width="6" height="5"><path d="M0.3,0 H4.1 L2.2,3.6 Z" fill="#333"/></svg>
<div class="abs" style="left:974px;top:162px;width:406px;height:29.5px;background:#f8f8f8"></div>
<div class="abs" style="left:987px;top:143.3px;width:7px;height:7px;background:#2e319e"></div>
<div class="t" style="letter-spacing:-0.156px;top:140.00px;font-size:10.5px;line-height:14px;color:#454646;left:1001.5px;"><span>Mobile</span></div>
<div class="t" style="letter-spacing:-0.033px;top:141.00px;font-size:9.5px;line-height:13px;color:#454646;right:199.50px;"><span>0.8<span style="font-size:7.5px"> s</span></span></div>
<div class="t" style="letter-spacing:-0.236px;top:141.00px;font-size:9.5px;line-height:13px;color:#454646;right:112.80px;"><span>0.1<span style="font-size:7.5px"> /min</span></span></div>
<div class="t" style="letter-spacing:0.201px;top:141.00px;font-size:9.8px;line-height:13px;color:#333;right:31.80px;"><span><span style="-webkit-text-stroke:0.3px #333">2.0</span><span style="font-size:7.5px"> /min</span></span></div>
<div class="abs" style="left:987px;top:172.4px;width:7px;height:7px;background:#522273"></div>
<div class="t" style="letter-spacing:-0.319px;top:169.00px;font-size:10.5px;line-height:14px;color:#454646;left:1001.5px;"><span>Desktop</span></div>
<div class="t" style="letter-spacing:-0.033px;top:170.00px;font-size:9.5px;line-height:13px;color:#454646;right:199.50px;"><span>0.8<span style="font-size:7.5px"> s</span></span></div>
<div class="t" style="letter-spacing:-0.159px;top:170.00px;font-size:9.5px;line-height:13px;color:#454646;right:112.80px;"><span>&lt;0.1<span style="font-size:7.5px"> /min</span></span></div>
<div class="t" style="letter-spacing:0.201px;top:170.00px;font-size:9.8px;line-height:13px;color:#333;right:31.80px;"><span><span style="-webkit-text-stroke:0.3px #333">2.0</span><span style="font-size:7.5px"> /min</span></span></div>
<div class="abs" style="left:987px;top:201.5px;width:7px;height:7px;background:#0b7245"></div>
<div class="t" style="letter-spacing:-0.339px;top:198.00px;font-size:10.5px;line-height:14px;color:#454646;left:1001.5px;"><span>Tablet</span></div>
<div class="t" style="letter-spacing:-0.452px;top:199.00px;font-size:9.5px;line-height:13px;color:#454646;right:199.50px;"><span>1.0<span style="font-size:7.5px"> s</span></span></div>
<div class="t" style="letter-spacing:-0.159px;top:199.00px;font-size:9.5px;line-height:13px;color:#454646;right:112.80px;"><span>&lt;0.1<span style="font-size:7.5px"> /min</span></span></div>
<div class="t" style="letter-spacing:-0.068px;top:199.00px;font-size:9.8px;line-height:13px;color:#333;right:31.80px;"><span><span style="-webkit-text-stroke:0.3px #333">&lt;0.1</span><span style="font-size:7.5px"> /min</span></span></div>
<div class="card" style="left:712px;top:412.2px;width:679px;height:195.6px"></div>
<div class="t" style="letter-spacing:0.362px;top:422.00px;font-size:14px;line-height:18px;color:#454646;-webkit-text-stroke:0.45px #454646;left:723.25px;"><span>Top 3 web request contributors</span></div>
<div class="ul" style="left:758px;top:462.5px;width:120.0px"></div>
<div class="ul" style="left:914px;top:462.5px;width:116.0px"></div>
<div class="ul" style="left:1147px;top:462.5px;width:38.0px"></div>
<div class="ul" style="left:1196px;top:462.5px;width:2.5px"></div>
<div class="ul" style="left:1266px;top:462.5px;width:6.0px"></div>
<div class="ul" style="left:1328px;top:462.5px;width:5.5px"></div>
<div class="t" style="letter-spacing:-0.504px;top:454.00px;font-size:9px;line-height:12px;color:#555;left:734.25px;"><span>Name</span></div>
<div class="t" style="letter-spacing:-0.467px;top:454.00px;font-size:9px;line-height:12px;color:#555;left:885px;"><span>Service</span></div>
<div class="t" style="letter-spacing:-0.220px;top:454.00px;font-size:9px;line-height:12px;color:#333;font-weight:bold;left:1041.1px;"><span>Total time consumption</span></div>
<svg class="abs" style="left:1140.6px;top:457.7px" width="6" height="5"><path d="M0.3,0 H4.1 L2.2,3.6 Z" fill="#333"/></svg>
<div class="t" style="letter-spacing:-0.410px;top:454.00px;font-size:9px;line-height:12px;color:#555;right:145.40px;"><span>Response time</span></div>
<div class="t" style="letter-spacing:-0.436px;top:454.00px;font-size:9px;line-height:12px;color:#555;right:82.50px;"><span>Failure Rate</span></div>
<div class="t" style="letter-spacing:-0.554px;top:454.00px;font-size:9px;line-height:12px;color:#555;right:31.20px;"><span>Requests</span></div>
<div class="abs" style="left:722.5px;top:499.8px;width:657.5px;height:27.8px;background:#f8f8f8"></div>
<div class="t" style="letter-spacing:-0.109px;top:478.00px;font-size:10.5px;line-height:14px;color:#00a1b2;left:734.25px;"><span>/orange-booking-finish.jsf</span></div>
<div class="t" style="letter-spacing:-0.299px;top:479.00px;font-size:10px;line-height:13px;color:#00a1b2;left:885px;"><span>MF EasyTravelWebserver:8079</span></div>
<div class="abs" style="left:1041.1px;top:483.6px;width:140.9px;height:5.8px;background:#a86fd0"></div>
<div class="t" style="letter-spacing:-0.114px;top:479.00px;font-size:9.5px;line-height:13px;color:#454646;right:148.50px;"><span>9.92 ms</span></div>
<div class="t" style="letter-spacing:-0.158px;top:479.00px;font-size:9.5px;line-height:13px;color:#454646;right:85.90px;"><span>0 %</span></div>
<div class="t" style="letter-spacing:-0.086px;top:479.00px;font-size:9.5px;line-height:13px;color:#454646;right:31.50px;"><span>6.14 /min</span></div>
<div class="t" style="letter-spacing:-0.114px;top:506.00px;font-size:10.5px;line-height:14px;color:#00a1b2;left:734.25px;"><span>/orange-booking-payment.jsf</span></div>
<div class="t" style="letter-spacing:-0.299px;top:507.00px;font-size:10px;line-height:13px;color:#00a1b2;left:885px;"><span>MF EasyTravelWebserver:8079</span></div>
<div class="abs" style="left:1046.4px;top:511.5px;width:135.6px;height:5.8px;background:#a86fd0"></div>
<div class="t" style="letter-spacing:-0.293px;top:507.00px;font-size:9.5px;line-height:13px;color:#454646;right:148.50px;"><span>641 ms</span></div>
<div class="t" style="letter-spacing:-0.158px;top:507.00px;font-size:9.5px;line-height:13px;color:#454646;right:85.90px;"><span>0 %</span></div>
<div class="t" style="letter-spacing:0.102px;top:507.00px;font-size:9.5px;line-height:13px;color:#454646;right:31.50px;"><span>2.06 /min</span></div>
<div class="t" style="letter-spacing:-0.403px;top:534.00px;font-size:10.5px;line-height:14px;color:#00a1b2;left:734.25px;"><span>JavaScript</span></div>
<div class="t" style="letter-spacing:-0.299px;top:535.00px;font-size:10px;line-height:13px;color:#00a1b2;left:885px;"><span>MF EasyTravelWebserver:8079</span></div>
<div class="abs" style="left:1156.3px;top:539.3px;width:25.7px;height:5.8px;background:#a86fd0"></div>
<div class="t" style="letter-spacing:-0.485px;top:535.00px;font-size:9.5px;line-height:13px;color:#454646;right:148.50px;"><span>1.27 ms</span></div>
<div class="t" style="letter-spacing:-0.158px;top:535.00px;font-size:9.5px;line-height:13px;color:#454646;right:85.90px;"><span>0 %</span></div>
<div class="t" style="letter-spacing:-0.142px;top:535.00px;font-size:9.5px;line-height:13px;color:#454646;right:31.50px;"><span>51.4 /min</span></div>
<div class="abs" style="left:1287.7px;top:576.6px;width:93px;height:22.4px;background:#00a1b2;border-radius:3px"></div>
<div class="t" style="letter-spacing:-0.093px;top:581.00px;font-size:10.5px;line-height:14px;color:#fff;-webkit-text-stroke:0.3px #fff;left:1299px;"><span>View full details</span></div>
<div class="card" style="left:712px;top:628px;width:679px;height:100px"></div>
<div class="t" style="letter-spacing:-0.021px;top:638.00px;font-size:14px;line-height:18px;color:#454646;-webkit-text-stroke:0.45px #454646;left:723.25px;"><span>Errors</span></div>
<div class="ul" style="left:754px;top:671px;width:556.0px"></div>
<div class="ul" style="left:1318px;top:671px;width:10.0px"></div>
<div class="t" style="letter-spacing:-0.228px;top:663.00px;font-size:8.5px;line-height:12px;color:#555;left:734.25px;"><span>Error</span></div>
<div class="t" style="letter-spacing:-0.186px;top:663.00px;font-size:8.5px;line-height:12px;color:#555;right:31.00px;"><span>Frequency</span></div>
<div class="t" style="letter-spacing:-0.189px;top:687.00px;font-size:10.5px;line-height:14px;color:#00a1b2;left:735px;"><span>Unexpected end of input</span></div>
<div class="t" style="letter-spacing:-0.362px;top:688.00px;font-size:9.6px;line-height:13px;color:#666;left:848.25px;"><span>– jquery-1.10.2.min.js</span></div>
<div class="t" style="letter-spacing:-0.010px;top:688.00px;font-size:9.6px;line-height:13px;color:#454646;right:31.40px;"><span>0.03<span style="font-size:7.8px"> /min</span></span></div>
<div class="abs" style="left:722.5px;top:708.2px;width:657.3px;height:30px;border:1px solid #b4b4b4;border-top-color:#9c9c9c;border-radius:3px;background:#fafafa;box-shadow:inset 0 1px 1px rgba(0,0,0,.12)"></div>
<div class="t" style="letter-spacing:-0.138px;top:715.00px;font-size:10.5px;line-height:14px;color:#00a1b2;left:735px;"><span>Unable to get property 'find' of undefined or null reference</span></div>
<div class="t" style="letter-spacing:-0.010px;top:716.00px;font-size:9.6px;line-height:13px;color:#454646;right:31.40px;"><span>0.03<span style="font-size:7.8px"> /min</span></span></div>
</body></html>
